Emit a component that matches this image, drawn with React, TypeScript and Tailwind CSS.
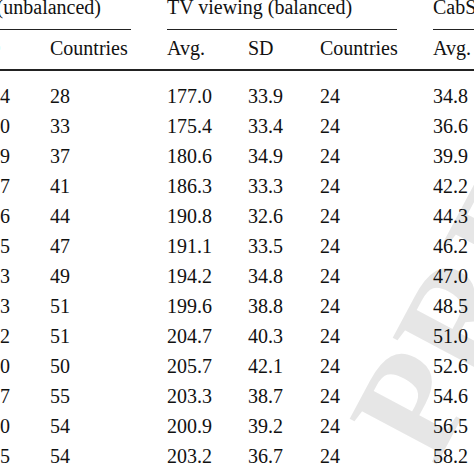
const groups = [
  { label: "TV viewing (unbalanced)", span: 2, align: "end" },
  { label: "TV viewing (balanced)", span: 3, align: "start" },
  { label: "CabSat viewing (unbalanced)", span: 1, align: "start" },
]

const subheads = ["SD", "Countries", "Avg.", "SD", "Countries", "Avg."]

const rows = [
  ["36.4", "28", "177.0", "33.9", "24", "34.8"],
  ["35.0", "33", "175.4", "33.4", "24", "36.6"],
  ["35.9", "37", "180.6", "34.9", "24", "39.9"],
  ["34.7", "41", "186.3", "33.3", "24", "42.2"],
  ["33.6", "44", "190.8", "32.6", "24", "44.3"],
  ["33.5", "47", "191.1", "33.5", "24", "46.2"],
  ["34.3", "49", "194.2", "34.8", "24", "47.0"],
  ["36.3", "51", "199.6", "38.8", "24", "48.5"],
  ["37.2", "51", "204.7", "40.3", "24", "51.0"],
  ["38.0", "50", "205.7", "42.1", "24", "52.6"],
  ["37.7", "55", "203.3", "38.7", "24", "54.6"],
  ["38.0", "54", "200.9", "39.2", "24", "56.5"],
  ["36.5", "54", "203.2", "36.7", "24", "58.2"],
]

const cols = "grid grid-cols-[75px_117px_81px_72px_113px_120px]"

export default function App() {
  return (
    <div
      className="relative h-[474px] w-[474px] overflow-hidden bg-white text-[20px] text-[#111]"
      style={{ fontFamily: '"Liberation Serif", "Times New Roman", serif' }}
    >
      {/* watermark */}
      <div className="pointer-events-none absolute left-[324px] top-[408px] origin-top-left -rotate-[62deg] whitespace-nowrap text-[150px] font-bold leading-none text-[#e6e6e6]">
        PREVIEW
      </div>

      <div className="relative -ml-[25px] -mt-[8px] w-[578px]">
        {/* group headers */}
        <div className={cols}>
          {groups.map((g) => (
            <div
              key={g.label}
              className={
                g.span === 2
                  ? "col-span-2 flex justify-end pr-[36px]"
                  : g.span === 3
                    ? "col-span-3 pr-[36px]"
                    : "col-span-1"
              }
            >
              <div className="w-full">
                <div
                  className={
                    g.align === "end"
                      ? "flex h-[30px] justify-end whitespace-nowrap pr-[30px] leading-[30px]"
                      : "h-[30px] whitespace-nowrap leading-[30px]"
                  }
                >
                  {g.label}
                </div>
                <div className="mt-[7px] h-px bg-[#222]" />
              </div>
            </div>
          ))}
        </div>

        {/* column headers */}
        <div className={`${cols} mt-[3px]`}>
          {subheads.map((h, i) => (
            <div key={i} className="h-[30px] whitespace-nowrap leading-[30px]">
              {h}
            </div>
          ))}
        </div>

        <div className="mt-[6px] h-[2px] bg-[#222]" />

        {/* body */}
        <div className="pt-[10px]">
          {rows.map((r, i) => (
            <div key={i} className={cols}>
              {r.map((v, j) => (
                <div key={j} className="h-[30px] whitespace-nowrap leading-[30px]">
                  {v}
                </div>
              ))}
            </div>
          ))}
        </div>
      </div>
    </div>
  )
}
